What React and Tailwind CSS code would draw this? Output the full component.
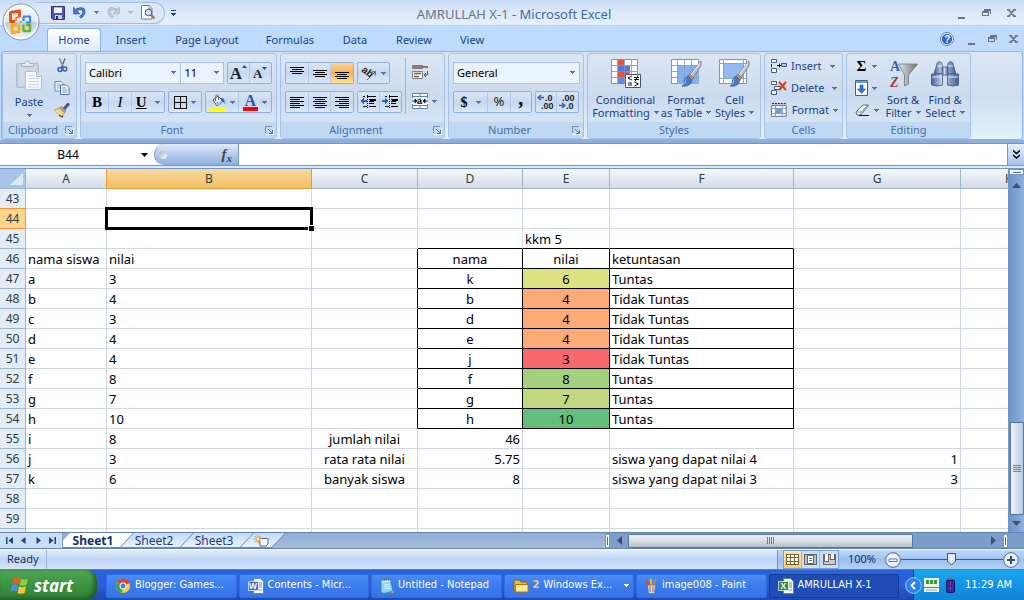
// src/App.jsx
import clsx from "clsx";

// ===== SHARED BITS =====
const Arrow = ({ className }) => (
  <svg width="5" height="3" viewBox="0 0 5 3" className={clsx("shrink-0", className)} shapeRendering="crispEdges">
    <path d="M0 0h5L2.500 3z" fill="currentColor" />
  </svg>
);

const boxCls = "flex h-[22px] rounded-[2px] border border-[#8fafdb] bg-gradient-to-b from-[#dbe6f5] via-[#c6d7ee] to-[#d9e8fa]";

const ToolButton = ({ label, className, children }) => (
  <button
    aria-label={label}
    className={clsx("flex items-center justify-center gap-1 border-r border-[#b3cae9] last:border-r-0 text-[#4d73b0]", className)}
  >
    {children}
  </button>
);

const Launcher = () => (
  <svg width="9" height="9" viewBox="0 0 9 9" fill="none" shapeRendering="crispEdges">
    <path d="M.5 7V.5H7" stroke="#6d93c4" />
    <path d="M3 3l4 4M4 7.5h3.500V4" stroke="#4d76ad" />
    <path d="M1 8.500h8M8.500 2v7" stroke="#fff" />
  </svg>
);

const Group = ({ title, launcher, className, children }) => (
  <section className={clsx("flex h-[86px] shrink-0 flex-col overflow-hidden rounded-[3px] border border-[#a5c3e6] bg-gradient-to-b from-[#dce7f5] via-[#cbdaed] to-[#dcebf9]", className)}>
    <div className="flex-1 px-1 pt-2">{children}</div>
    <div className="flex h-4 shrink-0 items-center bg-[#c0d8f1] px-[2px] text-[#4470a8]">
      <h2 className="flex-1 text-center whitespace-nowrap">{title}</h2>
      {launcher && (
        <button aria-label={`${title} options`} className="ml-1">
          <Launcher />
        </button>
      )}
    </div>
  </section>
);

const Lines = ({ rows, top = 2 }) => (
  <svg width="16" height="14" viewBox="0 0 16 14" shapeRendering="crispEdges">
    {rows.map(([x, w], i) => (
      <rect key={i} x={x} y={top + i * 2} width={w} height="1" fill="#000" />
    ))}
  </svg>
);

// ===== ICONS =====
const OfficeLogo = () => (
  <svg width="38" height="38" viewBox="0 0 38 38">
    <defs>
      <linearGradient id="orb" x1="0" y1="0" x2="0" y2="1">
        <stop offset="0" stopColor="#fff" />
        <stop offset=".48" stopColor="#e3e7ee" />
        <stop offset=".52" stopColor="#bcc8d9" />
        <stop offset="1" stopColor="#f6faff" />
      </linearGradient>
    </defs>
    <circle cx="19" cy="19" r="18" fill="url(#orb)" stroke="#7e91ad" />
    <circle cx="19" cy="19" r="16.500" fill="none" stroke="#fff" strokeWidth="1.500" opacity=".8" />
    <g fill="none" strokeWidth="2.800" strokeLinejoin="round">
      <path d="M13 18.500H8.500V9.500l9-1.500v6" stroke="#e8500e" />
      <path d="M14 18v-3.500l4-.5" stroke="#f0792e" strokeWidth="1.600" />
      <path d="M21 13.500h7v6h-4M21.500 14v4" stroke="#3c8ede" strokeWidth="2.200" />
      <path d="M18 28.500l-8 1v-7.500h5M17 22v6" stroke="#f8ac16" />
      <path d="M21.500 21.500v6.500H28V22h-4" stroke="#6eb130" strokeWidth="2.400" />
    </g>
    <path d="M18 18h2v2h-2z" fill="#c7a36c" />
  </svg>
);

const SaveIcon = () => (
  <svg width="14" height="14" viewBox="0 0 14 14">
    <path d="M.5.5h13v13H2l-1.500-1.500z" fill="#5454b8" stroke="#32327e" />
    <path d="M3 1h8v6H3z" fill="#f2f5fc" />
    <path d="M3 1h8v1H3z" fill="#8ec0ee" />
    <path d="M4 9h7v4H4z" fill="#c8cce4" />
    <path d="M5 10h2v3H5z" fill="#26265e" />
  </svg>
);

const UndoIcon = ({ color, edge, flip }) => (
  <svg width="13" height="13" viewBox="0 0 13 13" className={clsx(flip && "-scale-x-100")}>
    <path d="M2.500 5.500C6 1 11 2.500 11 6c0 2.500-2 4-4 5.500" fill="none" stroke={edge} strokeWidth="2.800" />
    <path d="M2.500 5.500C6 1 11 2.500 11 6c0 2.500-2 4-4 5.500" fill="none" stroke={color} strokeWidth="1.600" />
    <path d="M.5 1v7H7z" fill={color} stroke={edge} strokeWidth=".6" />
  </svg>
);

const PreviewIcon = () => (
  <svg width="15" height="15" viewBox="0 0 15 15">
    <path d="M.5.500h7.500l3 3V14H.5z" fill="#fff" stroke="#6b7c99" />
    <path d="M8 .5V4h3" fill="#d6e0f0" stroke="#6b7c99" strokeWidth=".8" />
    <path d="M9.500 9.500l4 4" stroke="#b9772a" strokeWidth="2.400" />
    <circle cx="7.500" cy="7.500" r="3.300" fill="#cfe6fb" stroke="#4a5871" />
  </svg>
);

const PasteIcon = () => (
  <svg width="27" height="31" viewBox="0 0 27 31">
    <rect x=".5" y="3.500" width="22" height="24" rx="1.500" fill="#c3cfdf" stroke="#acbcd1" />
    <rect x="2.500" y="5.500" width="18" height="20" fill="#d0dae8" />
    <path d="M5.500 6.500v-3h3.500c0-3.500 5-3.500 5 0h3.500v3z" fill="#e8edf4" stroke="#9cabc2" />
    <path d="M9.500 11.500h11l5 5v13h-16z" fill="#f7f9fc" stroke="#b4c1d3" />
    <path d="M20.500 11.500v5h5" fill="#dde5ef" stroke="#b4c1d3" />
    <path d="M12 15.500h6M12 18.500h11M12 21.500h11M12 24.500h11M12 27h11" stroke="#cbd4e1" />
  </svg>
);

const CutIcon = () => (
  <svg width="11" height="15" viewBox="0 0 11 15">
    <path d="M2.500.5l4 9M8 .5l-3.500 9" stroke="#5f6775" strokeWidth="1.500" fill="none" />
    <path d="M3 1l3 7" stroke="#c2c9d4" strokeWidth=".6" />
    <circle cx="3" cy="11.500" r="2" fill="#c7dcf7" stroke="#2f5fb3" strokeWidth="1.400" />
    <circle cx="7.800" cy="11" r="2" fill="#c7dcf7" stroke="#2f5fb3" strokeWidth="1.400" />
  </svg>
);

const CopyIcon = () => (
  <svg width="16" height="14" viewBox="0 0 16 14">
    <path d="M1 .5h6l2 2v7.500H1z" fill="#fff" stroke="#5f86bf" />
    <path d="M2.500 3h4M2.500 5h5M2.500 7h5" stroke="#7ea1d2" />
    <path d="M6.500 4h6l2.500 2.500v7H6.500z" fill="#fff" stroke="#4a70ad" />
    <path d="M8 7h4M8 9h5.500M8 11h5.500" stroke="#6a92cb" />
  </svg>
);

const PainterIcon = () => (
  <svg width="16" height="15" viewBox="0 0 16 15">
    <path d="M10 6l4-4.500" stroke="#56577e" strokeWidth="3.200" strokeLinecap="round" />
    <path d="M7.500 3.500l4.500 4.500-1.500 2L5.500 5z" fill="#9fa5b7" stroke="#6e7487" strokeWidth=".6" />
    <path d="M5.500 5l5 5-3 4L.5 7z" fill="#f1d584" stroke="#b98a32" strokeWidth=".8" />
    <path d="M2 7.500l6 5" stroke="#fff3c1" />
    <path d="M5 12l3 2 1-1" stroke="#6a441a" strokeWidth="1.200" fill="none" />
  </svg>
);

const GrowFont = ({ size, up }) => (
  <span className="flex items-start">
    <span className={clsx("font-['Liberation_Serif',serif] font-bold leading-none text-[#222]", size)}>A</span>
    <svg width="5" height="3" viewBox="0 0 5 3">
      <path d={up ? "M0 3h5L2.500 0z" : "M0 0h5L2.500 3z"} fill="#1f4b94" />
    </svg>
  </span>
);

const BorderIcon = () => (
  <svg width="13" height="13" viewBox="0 0 13 13" shapeRendering="crispEdges">
    <path d="M.5.500h12v12H.5zM6.500 0v13M0 6.500h13" fill="none" stroke="#111" />
  </svg>
);

const FillIcon = () => (
  <svg width="17" height="17" viewBox="0 0 17 17">
    <path d="M4 6l5-4 5 5-6 5z" fill="#e9f0fa" stroke="#45536d" />
    <path d="M6.500 7V2.500c0-2 3-2 3 0V6" fill="none" stroke="#63718a" />
    <path d="M12 4c3 0 4 2 3.500 6-1-2-2-2.500-3.500-3z" fill="#2d68b8" />
    <path d="M8 12l6-5-8 1z" fill="#a9c3e6" />
    <path d="M0 13h16v4H0z" fill="#ff0" />
  </svg>
);

const OrientIcon = () => (
  <svg width="16" height="16" viewBox="0 0 16 16">
    <text x="1" y="9" fontSize="10" fontWeight="700" fontFamily="Liberation Sans, sans-serif" fill="#222" transform="rotate(38 5 6)">ab</text>
    <path d="M6 15l8-8M14.500 6.500l-.500 4M14.500 6.500l-4 .5" stroke="#555c6b" fill="none" />
  </svg>
);

const IndentIcon = ({ right }) => (
  <svg width="17" height="14" viewBox="0 0 17 14" shapeRendering="crispEdges">
    <path d="M7 1.500h9M9 4.500h7M9 6.500h5M9 8.500h5M3 11.500h4M9 11.500h7M3 1.500h2" stroke="#000" />
    <path d="M10 4h6v2h-6z" />
    <path d="M7.500 0v14" stroke="#000" strokeDasharray="1 1" />
    <path d={right ? "M0 5h3V3l4 3-4 3V7H0z" : "M7 5H4V3L0 6l4 3V7h3z"} fill="#2e5fc0" />
  </svg>
);

const WrapIcon = () => (
  <svg width="17" height="16" viewBox="0 0 17 16" fill="none">
    <path d="M.5 1.500h10v3H.5z" fill="#fff" stroke="#6c7f9c" />
    <path d="M1 3h15" stroke="#8d4d22" strokeWidth="1.400" />
    <path d="M.5 7.500h10v7H.5z" fill="#fff" stroke="#6c7f9c" />
    <path d="M2 9.500h7M2 12.500h5" stroke="#8d4d22" strokeWidth="1.400" />
    <path d="M15.500 7v4h-3M14 9l-2 2 2 2" stroke="#2f5a9c" />
  </svg>
);

const MergeIcon = () => (
  <svg width="16" height="16" viewBox="0 0 16 16">
    <path d="M.5.500h15v15H.5z" fill="#fff" stroke="#6280ac" />
    <path d="M8 0v4M8 12v4M0 3.500h16M0 12.500h16" stroke="#6280ac" />
    <path d="M0 5h16v6H0z" fill="#dfe9f7" />
    <path d="M0 8h4M12 8h4M3 6v4l2-2zM13 6v4l-2-2z" stroke="#222" strokeWidth=".8" />
    <text x="5" y="11" fontSize="9" fontWeight="700" fontFamily="Liberation Sans, sans-serif">a</text>
  </svg>
);

const DecimalIcon = ({ more }) => (
  <svg width="18" height="16" viewBox="0 0 18 16">
    <g fontSize="9" fontWeight="700" fontFamily="Liberation Sans, sans-serif" fill="#222">
      <text x={more ? 8 : 4} y="7">{more ? ".0" : ".00"}</text>
      <text x={more ? 4 : 8} y="15">{more ? ".00" : ".0"}</text>
    </g>
    <path d={more ? "M7 3.500H2M4 1L1 3.500 4 6" : "M1 11.500h5M4 9l3 2.500L4 14"} stroke="#2e5fc0" strokeWidth="1.400" fill="none" />
  </svg>
);

const Brush = () => (
  <>
    <path d="M30 2L19 16l3 3L30 7z" fill="#b9bdc4" stroke="#6f747d" strokeWidth=".7" />
    <path d="M29 4L20 16" stroke="#f4f5f7" />
    <path d="M19 15l4 4-2 2-4-4z" fill="#c8914b" stroke="#7a5121" strokeWidth=".5" />
    <path d="M17 17l4 4c-1 5-5 7-10 6 3-1 2-3 2-5 1-3 2-4 4-5z" fill="#4c7ac2" stroke="#2e4f8e" strokeWidth=".6" />
    <path d="M15 20c-1 2 0 4-2 5" stroke="#a6c3ec" fill="none" />
  </>
);

const ConditionalIcon = () => (
  <svg width="30" height="30" viewBox="0 0 30 30">
    <path d="M.5.500h26v24H.5z" fill="#fff" stroke="#8393b2" />
    <path d="M7 1h6v24H7z" fill="#5d8ae6" />
    <path d="M7 1h6v6H7zM7 13h12v6H7z" fill="#e8533a" />
    <path d="M7 7h12v6H7z" fill="#4a7be0" />
    <path d="M0 6.500h27M0 12.500h27M0 18.500h27M6.500 0v25M13.500 0v25M20.500 0v25" stroke="#8393b2" strokeWidth=".8" />
    <path d="M14.500 15.500h15v13h-15z" fill="#fff" stroke="#4e5764" />
    <path d="M21 17l-4 2 4 2M23 18.500h5M23 20.500h5M27 16.500l-3 6M17 24h4M17 26h4M23.500 23l4 2-4 2" stroke="#111" fill="none" />
  </svg>
);

const TableIcon = () => (
  <svg width="31" height="30" viewBox="0 0 31 30">
    <path d="M.5.500h27v24H.5z" fill="#fff" stroke="#8393b2" />
    <path d="M7 7h21v18H7z" fill="#86b0f0" />
    <path d="M0 6.500h28M0 12.500h28M0 18.500h28M6.500 0v25M13.500 0v25M20.500 0v25" stroke="#8ba3ca" />
    <Brush />
  </svg>
);

const CellStyleIcon = () => (
  <svg width="31" height="30" viewBox="0 0 31 30">
    <path d="M.5.500h27v24H.5z" fill="#fff" stroke="#8393b2" />
    <path d="M5 5h20v14H5z" fill="#94baf4" />
    <path d="M0 4.500h28M0 19.500h28M4.500 0v25M24.500 0v25" stroke="#8ba3ca" />
    <Brush />
  </svg>
);

const InsertIcon = () => (
  <svg width="16" height="14" viewBox="0 0 16 14" fill="#fff" stroke="#44597d">
    <path d="M.5.500h5v3h-5zM.5 9.500h5v4h-5z" />
    <path d="M.5 5v3M6 6.500h4M8.500 4.500v4" stroke="#111" />
    <path d="M10.500 4.500h5v3h-5z" fill="#a9c8f2" />
  </svg>
);

const DeleteIcon = () => (
  <svg width="16" height="14" viewBox="0 0 16 14" fill="#fff" stroke="#44597d">
    <path d="M.5.500h5v3h-5zM.5 9.500h5v4h-5zM3.500 5.500h6v3h-6z" />
    <path d="M8 1l7 8M15 1L8 9" stroke="#e4391c" strokeWidth="2" />
  </svg>
);

const FormatIcon = () => (
  <svg width="17" height="16" viewBox="0 0 17 16" fill="none">
    <path d="M.5 3.500h15v11H.5z" fill="#fff" stroke="#5c7194" />
    <path d="M5 7h6v4H5z" fill="#6ca0ee" />
    <path d="M0 6.500h16M0 11.500h16M4.500 3v12M11.500 3v12" stroke="#8397b8" />
    <path d="M1 1.500h14" stroke="#111" strokeDasharray="2 1" />
  </svg>
);

const FillDownIcon = () => (
  <svg width="13" height="16" viewBox="0 0 13 16">
    <path d="M.5.500h12v15H.5z" fill="#fff" stroke="#3f5f92" />
    <path d="M1 1h11v2H1z" fill="#6f9ad9" />
    <path d="M5 5h3v4h2.500l-4 4.500-4-4.500H5z" fill="#2f75dc" stroke="#1e4fa3" strokeWidth=".6" />
  </svg>
);

const EraserIcon = () => (
  <svg width="15" height="12" viewBox="0 0 15 12">
    <path d="M1 8l7-7h5.500L7 9.500 5 11H2z" fill="#fff" stroke="#5d6980" />
    <path d="M1 8h5l7-7M6 8v3" fill="none" stroke="#8a95aa" />
    <path d="M4 11.500h10" stroke="#111" />
  </svg>
);

const SortIcon = () => (
  <svg width="29" height="32" viewBox="0 0 29 32">
    <defs>
      <linearGradient id="funnel">
        <stop offset="0" stopColor="#e6e6e6" />
        <stop offset="1" stopColor="#6e7073" />
      </linearGradient>
    </defs>
    <text x="1" y="13" fontSize="14" fontFamily="Liberation Serif, serif" fontWeight="700" fill="#2f62b4">A</text>
    <text x="1" y="29" fontSize="14" fontFamily="Liberation Serif, serif" fontStyle="italic" fontWeight="700" fill="#a33d38">Z</text>
    <path d="M9.500 6H28.500L19.500 17v9l-4 2V17z" fill="url(#funnel)" stroke="#72757a" strokeWidth=".8" />
  </svg>
);

const FindIcon = () => (
  <svg width="28" height="26" viewBox="0 0 28 26">
    <defs>
      <linearGradient id="bino">
        <stop offset="0" stopColor="#456095" />
        <stop offset=".4" stopColor="#cfdcf2" />
        <stop offset="1" stopColor="#3f5c96" />
      </linearGradient>
    </defs>
    <g fill="url(#bino)" stroke="#3f5687" strokeWidth=".8">
      <path d="M6 3c0-3 5-3 5 0l2 10H3zM17 3c0-3 5-3 5 0l3 10H15z" />
      <path d="M11 6h6v8h-6z" />
      <path d="M.5 13h11v11q-5.500 2-11 0zM16.500 13h11v11q-5.500 2-11 0z" />
    </g>
    <path d="M6 5h5M17 5h5M1 16h10M17 16h10" stroke="#e6edf9" />
  </svg>
);

const HelpIcon = () => (
  <svg width="14" height="14" viewBox="0 0 14 14">
    <circle cx="7" cy="7" r="6.500" fill="#fff" stroke="#5d7fbf" />
    <circle cx="7" cy="7" r="5.200" fill="#2b63cf" />
    <text x="4.200" y="10.500" fontSize="10" fontWeight="700" fontFamily="Liberation Sans, sans-serif" fill="#fff">?</text>
  </svg>
);

const WindowButtons = ({ className }) => (
  <div className={clsx("flex items-center text-[#6d7480]", className)}>
    <button aria-label="Minimize" className="flex h-3 w-2 items-end">
      <span className="h-[2px] w-[7px] bg-current" />
    </button>
    <button aria-label="Restore">
      <svg width="9" height="8" viewBox="0 0 9 8" fill="none" stroke="currentColor" shapeRendering="crispEdges">
        <path d="M2 .5h6.500V5M.5 2.500h6v4h-6zM.5 3.500h6M2 1.500h6" />
      </svg>
    </button>
    <button aria-label="Close">
      <svg width="9" height="8" viewBox="0 0 9 8" stroke="currentColor" strokeWidth="1.800">
        <path d="M1 0l7 8M8 0L1 8M0 .5h3M6 .5h3M0 7.500h3M6 7.500h3" />
      </svg>
    </button>
  </div>
);

// ===== TITLE BAR + TABS =====
const TitleBar = () => (
  <header className="relative flex h-[26px] items-center border-b border-[#b4d0f2] bg-gradient-to-b from-[#c9dcf6] via-[#dce9fa] to-[#e6f0fc] pr-2">
    <button aria-label="Office" className="absolute left-[2px] top-[3px] z-10">
      <OfficeLogo />
    </button>
    <div className="ml-9 flex h-[22px] w-[129px] items-center rounded-r-full border border-l-0 border-[#a3bde0] bg-[#dbe8f9] pl-[15px] text-[#5c82bb]">
      <button aria-label="Save"><SaveIcon /></button>
      <button aria-label="Undo" className="ml-2 flex items-center gap-2">
        <UndoIcon color="#4a7ad0" edge="#2f57a8" />
        <Arrow />
      </button>
      <button aria-label="Redo" className="ml-2 flex items-center gap-2 text-[#aeb6c2]">
        <UndoIcon color="#c3cbd8" edge="#a3adbd" flip />
        <Arrow />
      </button>
      <button aria-label="Print preview" className="ml-2"><PreviewIcon /></button>
    </div>
    <button aria-label="Customize toolbar" className="ml-[6px] flex flex-col gap-[2px] text-[#1e4582]">
      <span className="h-px w-[5px] bg-current" />
      <Arrow />
    </button>
    <h1 className="flex-1 pt-1 pr-[106px] text-center text-[13px] text-[#3e6aaa]">
      <span className="text-[#6b7484]">AMRULLAH X-1</span> - Microsoft Excel
    </h1>
    <WindowButtons className="gap-4" />
  </header>
);

const tabs = [
  { label: "Insert", cls: "w-[58px]" },
  { label: "Page Layout", cls: "w-[94px]" },
  { label: "Formulas", cls: "w-[72px]" },
  { label: "Data", cls: "w-[58px]" },
  { label: "Review", cls: "w-[60px]" },
  { label: "View", cls: "w-[56px]" },
];

const TabRow = () => (
  <nav className="flex h-[25px] items-end bg-[#bfdbff] pr-[6px] pl-[47px] text-[#15428b]">
    <button className="h-[23px] w-[54px] rounded-t-[3px] border border-b-0 border-[#8db2e3] bg-gradient-to-b from-white to-[#dfebfa]">Home</button>
    <div className="ml-px flex h-[22px] flex-1">
      {tabs.map((tab) => (
        <button key={tab.label} className={clsx("text-center whitespace-nowrap", tab.cls)}>{tab.label}</button>
      ))}
    </div>
    <div className="flex h-[24px] items-center gap-[14px]">
      <button aria-label="Help"><HelpIcon /></button>
      <WindowButtons className="gap-3" />
    </div>
  </nav>
);

// ===== RIBBON =====
const Select = ({ label, value, className }) => (
  <span className={clsx("relative flex h-[22px] border border-[#abc3e2] bg-[#eaf2fb] text-black", className)}>
    <select aria-label={label} defaultValue={value} className="w-full appearance-none bg-transparent pl-[3px] outline-none">
      <option>{value}</option>
    </select>
    <Arrow className="pointer-events-none absolute right-[4px] top-2 text-[#4d73b0]" />
  </span>
);

const BigButton = ({ icon, lines, className }) => (
  <button className={clsx("flex flex-col items-center leading-[13px] text-[#15428b]", className)}>
    <span className="mb-[3px] flex h-8 items-center">{icon}</span>
    <span>{lines[0]}</span>
    <span className="flex items-center gap-1 whitespace-nowrap">
      {lines[1]}
      <Arrow className="text-[#4d73b0]" />
    </span>
  </button>
);

const SmallButton = ({ icon, label, className }) => (
  <button aria-label={label} className={clsx("flex h-[22px] items-center gap-1 text-[#15428b]", className)}>
    {icon}
  </button>
);

const serif = "font-['Liberation_Serif',serif] text-[15px] leading-none text-black";

const Ribbon = () => (
  <div className="bg-[#bfdbff] px-px">
    <div className="flex h-[89px] gap-[3px] overflow-hidden rounded-[3px] border border-[#8db2e3] bg-gradient-to-b from-[#dbe6f4] via-[#cfdef0] to-[#e0f2fb] pt-px">
      <Group title="Clipboard" launcher className="w-[75px]">
        <div className="-mt-1 flex justify-between">
          <button className="flex w-[44px] flex-col items-center pt-[2px] text-[#15428b]">
            <PasteIcon />
            <span className="py-[3px]">Paste</span>
            <Arrow className="text-[#4d73b0]" />
          </button>
          <div className="flex w-5 flex-col items-center gap-2">
            <button aria-label="Cut"><CutIcon /></button>
            <button aria-label="Copy"><CopyIcon /></button>
            <button aria-label="Format painter"><PainterIcon /></button>
          </div>
        </div>
      </Group>

      <Group title="Font" launcher className="w-[197px]">
        <div className="flex">
          <Select label="Font name" value="Calibri" className="w-[97px]" />
          <Select label="Font size" value="11" className="-ml-px w-[44px]" />
          <div className={clsx(boxCls, "ml-[3px] w-[45px]")}>
            <ToolButton label="Grow font" className="w-1/2"><GrowFont size="text-[17px]" up /></ToolButton>
            <ToolButton label="Shrink font" className="w-1/2"><GrowFont size="text-[13px]" /></ToolButton>
          </div>
        </div>
        <div className="mt-[7px] flex gap-[3px]">
          <div className={clsx(boxCls, "w-[80px]")}>
            <ToolButton label="Bold" className="w-[23px]"><b className={serif}>B</b></ToolButton>
            <ToolButton label="Italic" className="w-[23px]"><i className={serif}>I</i></ToolButton>
            <ToolButton label="Underline" className="flex-1"><u className={clsx(serif, "font-bold")}>U</u><Arrow className="ml-1" /></ToolButton>
          </div>
          <div className={clsx(boxCls, "w-[35px]")}>
            <ToolButton label="Borders" className="flex-1"><BorderIcon /><Arrow /></ToolButton>
          </div>
          <div className={clsx(boxCls, "w-[67px]")}>
            <ToolButton label="Fill color" className="w-1/2"><FillIcon /><Arrow /></ToolButton>
            <ToolButton label="Font color" className="w-1/2">
              <span className="border-b-4 border-[#f00] px-[2px] font-['Liberation_Serif',serif] text-[16px] font-bold leading-[13px] text-[#2d56a0]">A</span>
              <Arrow />
            </ToolButton>
          </div>
        </div>
      </Group>

      <Group title="Alignment" launcher className="w-[165px]">
        <div className="flex">
          <div className="flex w-[118px] flex-col gap-[7px]">
            <div className="flex gap-[3px]">
              <div className={clsx(boxCls, "w-[69px]")}>
                <ToolButton label="Top align" className="flex-1"><Lines top={1} rows={[[1, 14], [3, 10], [1, 14], [3, 10]]} /></ToolButton>
                <ToolButton label="Middle align" className="flex-1"><Lines top={4} rows={[[1, 14], [3, 10], [1, 14], [3, 10]]} /></ToolButton>
                <ToolButton label="Bottom align" className="flex-1 bg-gradient-to-b from-[#fbd3a0] via-[#fbb04e] to-[#fee592]"><Lines top={6} rows={[[1, 14], [3, 10], [1, 14], [3, 10]]} /></ToolButton>
              </div>
              <div className={clsx(boxCls, "w-[33px]")}>
                <ToolButton label="Orientation" className="flex-1"><OrientIcon /><Arrow /></ToolButton>
              </div>
            </div>
            <div className="flex gap-[3px]">
              <div className={clsx(boxCls, "w-[69px]")}>
                <ToolButton label="Align left" className="flex-1"><Lines rows={[[1, 14], [1, 10], [1, 14], [1, 10], [1, 14], [1, 10]]} /></ToolButton>
                <ToolButton label="Align center" className="flex-1"><Lines rows={[[1, 14], [3, 10], [1, 14], [3, 10], [1, 14], [3, 10]]} /></ToolButton>
                <ToolButton label="Align right" className="flex-1"><Lines rows={[[1, 14], [5, 10], [1, 14], [5, 10], [1, 14], [5, 10]]} /></ToolButton>
              </div>
              <div className={clsx(boxCls, "w-[45px]")}>
                <ToolButton label="Decrease indent" className="w-1/2"><IndentIcon /></ToolButton>
                <ToolButton label="Increase indent" className="w-1/2"><IndentIcon right /></ToolButton>
              </div>
            </div>
          </div>
          <div className="-mt-1 ml-[2px] flex h-14 flex-col items-start gap-[13px] border-l border-[#98b4da] pt-[6px] pl-[6px] text-[#4d73b0]">
            <button aria-label="Wrap text"><WrapIcon /></button>
            <button aria-label="Merge and center" className="flex items-center gap-1"><MergeIcon /><Arrow /></button>
          </div>
        </div>
      </Group>

      <Group title="Number" launcher className="w-[136px]">
        <Select label="Number format" value="General" className="w-[127px]" />
        <div className="mt-[7px] flex gap-[3px]">
          <div className={clsx(boxCls, "w-[80px]")}>
            <ToolButton label="Currency" className="w-[34px]"><b className="font-['Liberation_Serif',serif] text-[14px] text-black">$</b><Arrow className="ml-1" /></ToolButton>
            <ToolButton label="Percent" className="flex-1 text-[13px]"><span className="text-[#222]">%</span></ToolButton>
            <ToolButton label="Comma" className="w-[20px]"><b className="-mt-2 font-['Liberation_Serif',serif] text-[20px] leading-none text-black">,</b></ToolButton>
          </div>
          <div className={clsx(boxCls, "w-[45px]")}>
            <ToolButton label="Increase decimal" className="w-1/2"><DecimalIcon more /></ToolButton>
            <ToolButton label="Decrease decimal" className="w-1/2"><DecimalIcon /></ToolButton>
          </div>
        </div>
      </Group>

      <Group title="Styles" className="w-[174px]">
        <div className="-mt-1 flex">
          <BigButton icon={<ConditionalIcon />} lines={["Conditional", "Formatting"]} className="w-[67px]" />
          <BigButton icon={<TableIcon />} lines={["Format", "as Table"]} className="w-[54px]" />
          <BigButton icon={<CellStyleIcon />} lines={["Cell", "Styles"]} className="w-[43px]" />
        </div>
      </Group>

      <Group title="Cells" className="w-[79px]">
        <div className="-mt-[7px] flex flex-col pl-[2px]">
          <SmallButton label="Insert" icon={<><InsertIcon />Insert<Arrow className="ml-1 text-[#4d73b0]" /></>} />
          <SmallButton label="Delete" icon={<><DeleteIcon />Delete<Arrow className="ml-1 text-[#4d73b0]" /></>} />
          <SmallButton label="Format" icon={<><FormatIcon />Format<Arrow className="text-[#4d73b0]" /></>} />
        </div>
      </Group>

      <Group title="Editing" className="w-[125px]">
        <div className="-mt-[7px] flex">
          <div className="flex w-[32px] flex-col pl-1 text-[#4d73b0]">
            <SmallButton label="Sum" icon={<><b className="w-[13px] font-['Liberation_Serif',serif] text-[15px] text-black">Σ</b><Arrow className="text-[#4d73b0]" /></>} />
            <SmallButton label="Fill" icon={<><FillDownIcon /><Arrow className="text-[#4d73b0]" /></>} />
            <SmallButton label="Clear" icon={<><EraserIcon /><Arrow className="text-[#4d73b0]" /></>} />
          </div>
          <div className="flex pt-[3px]">
            <BigButton icon={<SortIcon />} lines={["Sort &", "Filter"]} className="w-[42px]" />
            <BigButton icon={<FindIcon />} lines={["Find &", "Select"]} className="w-[42px]" />
          </div>
        </div>
      </Group>
    </div>
  </div>
);

// ===== FORMULA BAR =====
const FormulaBar = () => (
  <div className="flex h-[23px] border-y border-[#6f97c9] bg-white text-[12px]">
    <div className="relative w-[154px]">
      <input aria-label="Name box" defaultValue="B44" className="h-full w-[136px] bg-transparent text-center outline-none" />
      <svg width="7" height="4" viewBox="0 0 7 4" className="absolute top-[9px] right-[6px]">
        <path d="M0 0h7L3.500 4z" />
      </svg>
    </div>
    <div className="flex w-[85px] items-center justify-between rounded-l-full border-r border-l border-[#7395c4] bg-gradient-to-b from-[#dfe9f8] to-[#8db0e0] pr-[6px] pl-1">
      <span className="h-2 w-2 rounded-full bg-gradient-to-br from-[#a5b0c2] to-white" />
      <button aria-label="Insert function" className="font-['Liberation_Serif',serif] text-[15px] font-bold italic leading-none text-[#444]">
        f<sub className="text-[11px]">x</sub>
      </button>
    </div>
    <input aria-label="Formula" className="min-w-0 flex-1 px-1 outline-none" />
    <button aria-label="Expand formula bar" className="flex w-[17px] items-center justify-center border-l border-[#6f97c9] bg-gradient-to-b from-[#e6effb] to-[#a5c3ec]">
      <svg width="7" height="9" viewBox="0 0 7 9" fill="none" stroke="#000" strokeWidth="1.500">
        <path d="M0 .5l3.500 3 3.500-3M0 5l3.500 3L7 5" />
      </svg>
    </button>
  </div>
);

// ===== SHEET =====
const columns = [
  { name: "A", cls: "w-[81px]" },
  { name: "B", cls: "w-[205px]" },
  { name: "C", cls: "w-[106px]" },
  { name: "D", cls: "w-[105px]" },
  { name: "E", cls: "w-[87px]" },
  { name: "F", cls: "w-[184px]" },
  { name: "G", cls: "w-[167px]" },
  { name: "H", cls: "" },
];

const siswa = [["a", 3], ["b", 4], ["c", 3], ["d", 4], ["e", 4], ["f", 8], ["g", 7], ["h", 10], ["i", 8], ["j", 3], ["k", 6]];

const hasil = [
  ["k", 6, "Tuntas", "bg-[#dde283]"],
  ["b", 4, "Tidak Tuntas", "bg-[#fcaa78]"],
  ["d", 4, "Tidak Tuntas", "bg-[#fcaa78]"],
  ["e", 4, "Tidak Tuntas", "bg-[#fcaa78]"],
  ["j", 3, "Tidak Tuntas", "bg-[#f8696b]"],
  ["f", 8, "Tuntas", "bg-[#a2d07f]"],
  ["g", 7, "Tuntas", "bg-[#c0d981]"],
  ["h", 10, "Tuntas", "bg-[#63be7b]"],
];

const cells = {
  E45: { v: "kkm 5" },
  A46: { v: "nama siswa" },
  B46: { v: "nilai" },
  D46: { v: "nama", cls: "text-center" },
  E46: { v: "nilai", cls: "text-center" },
  F46: { v: "ketuntasan" },
  C55: { v: "jumlah nilai", cls: "text-center" },
  D55: { v: "46", cls: "text-right" },
  C56: { v: "rata rata nilai", cls: "text-center" },
  D56: { v: "5.75", cls: "text-right" },
  C57: { v: "banyak siswa", cls: "text-center" },
  D57: { v: "8", cls: "text-right" },
  F56: { v: "siswa yang dapat nilai 4" },
  G56: { v: "1", cls: "text-right" },
  F57: { v: "siswa yang dapat nilai 3" },
  G57: { v: "3", cls: "text-right" },
};

siswa.forEach(([nama, nilai], i) => {
  cells[`A${47 + i}`] = { v: nama };
  cells[`B${47 + i}`] = { v: nilai };
});

hasil.forEach(([nama, nilai, ket, bg], i) => {
  cells[`D${47 + i}`] = { v: nama, cls: "text-center" };
  cells[`E${47 + i}`] = { v: nilai, cls: clsx("text-center", bg) };
  cells[`F${47 + i}`] = { v: ket };
});

const rowNumbers = Array.from({ length: 17 }, (_, i) => 43 + i);

// the result table D46:F54 has black borders all round
const borderCls = (col, row) => {
  const inRows = row >= 46 && row <= 54;
  const inCols = col >= "D" && col <= "F";
  return clsx(
    inRows && col >= "C" && col <= "F" ? "border-r-black" : "border-r-[#d0d7e5]",
    inCols && row >= 45 && row <= 54 ? "border-b-black" : "border-b-[#d0d7e5]"
  );
};

const Sheet = () => (
  <div className="min-w-0 flex-1 overflow-hidden bg-white">
    <table className="w-full min-w-[1059px] table-fixed border-separate border-spacing-0 text-[13px] leading-[18px] text-black">
      <thead>
        <tr className="h-5 text-[12px] text-[#27413e]">
          <th className="w-[26px] border-r border-b border-[#9eb6ce] bg-[#a9c4e9] p-0">
            <svg width="20" height="16" viewBox="0 0 20 16" className="ml-auto">
              <path d="M18 2v12H5z" fill="#dfeaf8" />
            </svg>
          </th>
          {columns.map((c) => (
            <th
              key={c.name}
              scope="col"
              className={clsx(
                "border-r border-b p-0 pt-px font-normal",
                c.cls,
                c.name === "B"
                  ? "border-[#f29536] bg-gradient-to-b from-[#f9d99f] to-[#f1c15f]"
                  : "border-[#9eb6ce] bg-gradient-to-b from-[#f6f9fc] to-[#d3dbe8]",
                c.name === "A" && "border-r-[#f29536]"
              )}
            >
              {c.name}
            </th>
          ))}
        </tr>
      </thead>
      <tbody>
        {rowNumbers.map((row) => (
          <tr key={row} className="h-5">
            <th
              scope="row"
              className={clsx(
                "border-r border-b p-0 pt-px text-[12px] font-normal text-[#27413e]",
                row === 44 ? "border-[#f29536] bg-[#ffd58d]" : "border-[#9eb6ce] bg-[#e4ecf7]",
                row === 43 && "border-b-[#f29536]"
              )}
            >
              {row}
            </th>
            {columns.map((c) => {
              const cell = cells[`${c.name}${row}`];
              const active = c.name === "B" && row === 44;
              return (
                <td
                  key={c.name}
                  className={clsx("border-r border-b px-[2px] py-0 whitespace-nowrap", borderCls(c.name, row), cell?.cls, active && "relative")}
                >
                  {cell?.v}
                  {active && (
                    <span className="absolute -inset-x-[2px] -inset-y-[2px] border-[3px] border-black">
                      <span className="absolute -right-[4px] -bottom-[4px] h-[6px] w-[6px] border-t border-l border-white bg-black" />
                    </span>
                  )}
                </td>
              );
            })}
          </tr>
        ))}
        <tr className="h-[3px]">
          <th className="border-r border-[#9eb6ce] bg-[#e4ecf7] p-0" />
          {columns.map((c) => (
            <td key={c.name} className="border-r border-[#d0d7e5] p-0" />
          ))}
        </tr>
      </tbody>
    </table>
  </div>
);

const VerticalScroll = () => (
  <div className="flex w-4 flex-col items-center border-l border-[#6f95c8] bg-gradient-to-r from-[#6d93c6] to-[#8fb0dc]">
    <div className="flex h-[6px] w-full items-center justify-center border border-[#6f97c9] bg-white">
      <span className="h-px w-2 bg-[#3f6ca8]" />
    </div>
    <button aria-label="Scroll up" className="flex h-5 items-center">
      <svg width="9" height="5" viewBox="0 0 9 5"><path d="M0 5h9L4.500 0z" fill="#464d66" /></svg>
    </button>
    <div className="flex-1" />
    <div className="flex h-[93px] w-[14px] flex-col items-center justify-center gap-px rounded-[1px] border border-[#5d7399] bg-gradient-to-r from-[#f0f3f8] via-[#d5dfec] to-[#b4c8e3]">
      {[0, 1, 2, 3].map((i) => (
        <span key={i} className="h-px w-2 bg-[#6d7d92]" />
      ))}
    </div>
    <button aria-label="Scroll down" className="flex h-[17px] items-center">
      <svg width="9" height="5" viewBox="0 0 9 5"><path d="M0 0h9L4.500 5z" fill="#464d66" /></svg>
    </button>
  </div>
);

// ===== SHEET TABS =====
const NavIcon = ({ d }) => (
  <svg width="7" height="7" viewBox="0 0 7 7" fill="#1c4587"><path d={d} /></svg>
);

const SheetTab = ({ active, className, children, label }) => (
  <button aria-label={label} className={clsx("relative flex h-[15px] items-center justify-center text-[12px] leading-none", active ? "z-10 font-bold text-[#0b2f6b]" : "text-[#1b3f7c]", className)}>
    <span className={clsx("absolute inset-0 -skew-x-[43deg] border-r border-b border-[#6a8ab8]", active ? "bg-white" : "bg-gradient-to-b from-[#c3daf6] to-[#e8f2fd]")} />
    <span className="relative">{children}</span>
  </button>
);

const SplitHandle = () => (
  <span className="flex h-[14px] w-[5px] items-center justify-center border border-[#6f97c9] bg-white">
    <span className="h-2 w-px bg-[#3f6ca8]" />
  </span>
);

const SheetTabs = () => (
  <div className="flex h-[17px] border-t border-b border-[#5f82b4] bg-gradient-to-b from-[#93aed3] to-[#a3bbdd]">
    <div className="relative z-20 flex w-[63px] items-center justify-around border-r border-[#7e9fce] bg-[#c9ddf8] px-[2px]">
      <button aria-label="First sheet"><NavIcon d="M0 0h1.500v7H0zM7 0v7L2.500 3.500z" /></button>
      <button aria-label="Previous sheet"><NavIcon d="M5.500 0v7L1 3.500z" /></button>
      <button aria-label="Next sheet"><NavIcon d="M1.500 0v7L6 3.500z" /></button>
      <button aria-label="Last sheet"><NavIcon d="M0 0v7l4.500-3.500zM5.500 0H7v7H5.500z" /></button>
    </div>
    <SheetTab active className="w-[64px] pr-1">Sheet1</SheetTab>
    <SheetTab className="w-[60px] pr-[6px]">Sheet2</SheetTab>
    <SheetTab className="w-[60px] pr-[6px]">Sheet3</SheetTab>
    <SheetTab label="Insert sheet" className="w-[32px] pr-1">
      <svg width="15" height="12" viewBox="0 0 15 12">
        <path d="M4 3.500h10V9l-2 2H6V8z" fill="#fff" stroke="#54678c" />
        <path d="M4 0v8M0 4h8M1 1l6 6M7 1L1 7" stroke="#e8962a" />
        <circle cx="4" cy="4" r="1.300" fill="#fff2b0" />
      </svg>
    </SheetTab>
    <div className="flex-1" />
    <div className="flex items-center bg-[#7d9dcb]">
      <SplitHandle />
      <button aria-label="Scroll left" className="flex w-[18px] justify-center">
        <svg width="5" height="9" viewBox="0 0 5 9"><path d="M5 0v9L0 4.500z" fill="#464d66" /></svg>
      </button>
      <div className="flex h-[14px] w-[285px] items-center justify-center gap-px rounded-[1px] border border-[#5d7399] bg-gradient-to-b from-[#eef1f5] via-[#d9dfe7] to-[#b2bdcc]">
        {[0, 1, 2, 3].map((i) => (
          <span key={i} className="h-[7px] w-px bg-[#6d7d92]" />
        ))}
      </div>
      <button aria-label="Scroll right" className="ml-[78px] flex w-[12px] justify-start">
        <svg width="5" height="9" viewBox="0 0 5 9"><path d="M0 0v9l5-4.500z" fill="#464d66" /></svg>
      </button>
      <SplitHandle />
      <div className="w-4" />
    </div>
  </div>
);

// ===== STATUS BAR =====
const viewCls = "flex h-[17px] w-[18px] items-center justify-center border-r border-[#9db7dc] last:border-r-0";

const StatusBar = () => (
  <footer className="flex h-[21px] border-t border-b border-t-white border-b-[#4a7fd6] bg-gradient-to-b from-[#e1edfb] via-[#bdd5f5] to-[#d6e6fb] text-[#15305c]">
    <div className="flex w-[47px] items-center border-r border-[#98b5de] pl-[7px]">Ready</div>
    <div className="flex-1" />
    <div className="flex items-center border-l border-[#6f92c6] bg-gradient-to-b from-[#c3daf8] via-[#9cbfee] to-[#b5d1f6] pr-[5px] pl-[5px]">
      <div className="flex border border-[#7d9fcf]">
        <button aria-label="Normal view" className={clsx(viewCls, "bg-gradient-to-b from-[#fde3b0] to-[#fec868]")}>
          <svg width="13" height="11" viewBox="0 0 13 11" fill="#fff" stroke="#76602c" shapeRendering="crispEdges">
            <path d="M.5.500h12v10H.5zM0 3.500h13M0 7.500h13M4.500 0v11M8.500 0v11" />
          </svg>
        </button>
        <button aria-label="Page layout view" className={clsx(viewCls, "bg-[#c9dcf5]")}>
          <svg width="13" height="11" viewBox="0 0 13 11" fill="#fff" stroke="#666" shapeRendering="crispEdges">
            <path d="M.5.500h12v10H.5z" fill="#bbb" />
            <path d="M3.500 1.500h6v8h-6zM5 4.500h3M5 6.500h3" />
          </svg>
        </button>
        <button aria-label="Page break view" className={clsx(viewCls, "bg-[#c9dcf5]")}>
          <svg width="13" height="11" viewBox="0 0 13 11" fill="#ccc" stroke="#666" shapeRendering="crispEdges">
            <path d="M.5.500h12v10H.5z" />
            <path d="M1.500 0v7.500h4V0M7.500 0v5.500h4V0" fill="#fff" />
          </svg>
        </button>
      </div>
      <span className="w-[46px] text-center">100%</span>
      <button aria-label="Zoom out">
        <svg width="16" height="16" viewBox="0 0 16 16">
          <circle cx="8" cy="8" r="7.300" fill="#e9f1fc" stroke="#54698f" />
          <path d="M4 7h8v2.500H4z" fill="#fff" stroke="#54698f" strokeWidth=".9" />
        </svg>
      </button>
      <div className="relative flex h-4 w-[102px] items-center">
        <span className="h-px w-full bg-[#3e5d8d]" />
        <svg width="9" height="13" viewBox="0 0 9 13" className="absolute top-[1px] left-[46px]">
          <path d="M.5.500h8V8l-4 4-4-4z" fill="#dce9fa" stroke="#3c557f" />
          <path d="M4.500 3v5" stroke="#fff" />
        </svg>
      </div>
      <button aria-label="Zoom in">
        <svg width="16" height="16" viewBox="0 0 16 16">
          <circle cx="8" cy="8" r="7.300" fill="#e9f1fc" stroke="#54698f" />
          <path d="M8 4v8M4 8h8" stroke="#3d4c68" strokeWidth="2.200" />
        </svg>
      </button>
    </div>
  </footer>
);

// ===== TASKBAR =====
const WindowsFlag = () => (
  <svg width="20" height="18" viewBox="0 0 20 18">
    <path d="M4 2q3-2 6 0L8.500 8q-3-1.500-6 0z" fill="#f0592b" />
    <path d="M11 2.500q3 2 7 0L16.500 9q-4 1.500-7 0z" fill="#8ccb3f" />
    <path d="M2 9.500q3-2 6 0L6.500 15.500q-3-2-6 0z" fill="#4f8df5" />
    <path d="M9 10.500q3 1.500 7 0L14.500 17q-4 1.500-7 0z" fill="#fbc928" />
  </svg>
);

const ChromeIcon = () => (
  <svg width="16" height="16" viewBox="0 0 16 16">
    <circle cx="8" cy="8" r="7" fill="#f7cf2d" />
    <path d="M8 8L2 4.300A7 7 0 0 1 14.500 5z" fill="#dd4232" />
    <path d="M8 8L2 4.300A7 7 0 0 0 7 15z" fill="#3aa652" />
    <circle cx="8" cy="8" r="3.400" fill="#fff" />
    <circle cx="8" cy="8" r="2.500" fill="#3f7ee0" />
  </svg>
);

const DocIcon = ({ letter, tile, edge }) => (
  <svg width="16" height="16" viewBox="0 0 16 16">
    <path d="M5.500.500h7l3 3v12h-10z" fill="#fff" stroke={edge} />
    <path d="M11 5h3M11 7h3M11 9h3M8 12h6" stroke={edge} />
    <path d="M.5 3.500h10v9H.5z" fill={tile} stroke="#fff" strokeWidth=".7" />
    <text x={letter === "W" ? 1 : 2.500} y="11" fontSize="8.500" fontWeight="700" fontFamily="Liberation Sans, sans-serif" fill="#fff">{letter}</text>
  </svg>
);

const NotepadIcon = () => (
  <svg width="14" height="16" viewBox="0 0 14 16">
    <path d="M1 2l9-1 3 12-9 2.500-3-1z" fill="#8fd3ec" stroke="#3a7c9b" strokeWidth=".7" />
    <path d="M1.500 4l9-1" stroke="#e9fbff" />
    <path d="M2 1.500h9" stroke="#5a6a70" strokeWidth="2" strokeDasharray="1 1" />
    <path d="M4 7l6-1M4.500 9l6-1M5 11l6-1" stroke="#d3f2fb" />
    <path d="M10 14l3 1 1-2z" fill="#e2b13c" />
  </svg>
);

const FolderIcon = () => (
  <svg width="16" height="14" viewBox="0 0 16 14">
    <path d="M1 12V2.500L2.500 1h4L8 3h6v9z" fill="#e8b93e" stroke="#8a6310" />
    <path d="M2.500 5.500h12.500V13H2.500z" fill="#fde98a" stroke="#a87a18" />
  </svg>
);

const PaintIcon = () => (
  <svg width="13" height="16" viewBox="0 0 13 16">
    <path d="M4 8L1 2" stroke="#e0452d" strokeWidth="2" />
    <path d="M6 8V1" stroke="#e9b92c" strokeWidth="2" />
    <path d="M8 8l3-7" stroke="#c7803a" strokeWidth="2" />
    <path d="M2.500 7h8l-1 8.500h-6z" fill="#cfe0ee" stroke="#5b7791" strokeWidth=".7" />
    <path d="M5 8v6M8 8v6" stroke="#d5542d" />
  </svg>
);

const tasks = [
  { label: "Blogger: Games...", icon: <ChromeIcon /> },
  { label: "Contents - Micr...", icon: <DocIcon letter="W" tile="#3b66b8" edge="#5e83c4" /> },
  { label: "Untitled - Notepad", icon: <NotepadIcon /> },
  { label: "Windows Ex...", icon: <FolderIcon />, count: 2 },
  { label: "image008 - Paint", icon: <PaintIcon /> },
  { label: "AMRULLAH X-1", icon: <DocIcon letter="X" tile="#2f8a3c" edge="#4d9a56" />, active: true },
];

const Taskbar = () => (
  <div className="flex h-[30px] bg-gradient-to-b from-[#2a63d8] via-[#2a60dc] to-[#1e49ae] font-['DejaVu_Sans_Condensed','Liberation_Sans',sans-serif] text-white">
    <button className="flex w-[97px] items-center gap-1 rounded-r-[10px] bg-gradient-to-b from-[#4fa557] via-[#3b9440] to-[#2f7d33] pl-[10px] shadow-[inset_-3px_-2px_4px_#1f5c24]">
      <WindowsFlag />
      <span className="font-['Noto_Sans',sans-serif] text-[17px] font-bold italic leading-none">start</span>
    </button>
    <div className="flex min-w-0 flex-1 items-center gap-[2px] pt-px pr-[3px] pl-[9px]">
      {tasks.map((task) => (
        <button
          key={task.label}
          className={clsx(
            "flex h-[24px] min-w-0 flex-1 items-center gap-1 overflow-hidden rounded-[2px] border pl-2 text-[11px] whitespace-nowrap",
            task.active ? "border-[#173a92] bg-[#1f4db5]" : "border-[#2f6be4] bg-gradient-to-b from-[#4a8cf4] via-[#3b7bee] to-[#3874e6]"
          )}
        >
          {task.icon}
          {task.count && <b className="text-[#fccb7b]">{task.count}</b>}
          {task.label}
          {task.count && <Arrow className="mr-1 ml-auto" />}
        </button>
      ))}
    </div>
    <div className="relative ml-[11px] flex w-[111px] items-center border-l border-[#0d3e94] bg-gradient-to-b from-[#19a7ef] via-[#1592e6] to-[#1285d6] pl-[10px] text-[11px]">
      <button aria-label="Show hidden icons" className="absolute top-[7px] -left-[9px]">
        <svg width="17" height="17" viewBox="0 0 17 17">
          <circle cx="8.500" cy="8.500" r="7.800" fill="#2b7fe6" stroke="#9cd0fa" />
          <path d="M10 5L6.500 8.500 10 12" fill="none" stroke="#fff" strokeWidth="2" />
        </svg>
      </button>
      <svg width="16" height="16" viewBox="0 0 16 16">
        <path d="M0 1h15v9H0zM0 11h15v4H0z" fill="#f1f3ea" />
        <path d="M2 3h3v4H2zM6 3h3v4H6zM10 3h3v4h-3z" fill="#2f9e37" />
        <path d="M2 13h11" stroke="#8ab" />
      </svg>
      <svg width="9" height="15" viewBox="0 0 9 15" className="ml-[6px]">
        <rect x=".5" y="2" width="8" height="12.500" rx="1.500" fill="#1b2fc0" stroke="#0a1360" />
        <path d="M3 0h3v2H3zM4 4h1v3H4zM4 9h1v3H4z" fill="#e2332c" />
      </svg>
      <time className="ml-[10px] whitespace-nowrap">11:29 AM</time>
    </div>
  </div>
);

const App = () => (
  <div className="flex min-h-screen flex-col overflow-hidden bg-[#bfdbff] font-['Noto_Sans',sans-serif] text-[11px]">
    <TitleBar />
    <TabRow />
    <Ribbon />
    <div className="h-[3px] bg-[#8fb0dc]" />
    <FormulaBar />
    <div className="h-[3px] border-b border-[#6f97c9] bg-[#dbe8f9]" />
    <main className="flex">
      <Sheet />
      <VerticalScroll />
    </main>
    <SheetTabs />
    <StatusBar />
    <Taskbar />
  </div>
);

export default App;
